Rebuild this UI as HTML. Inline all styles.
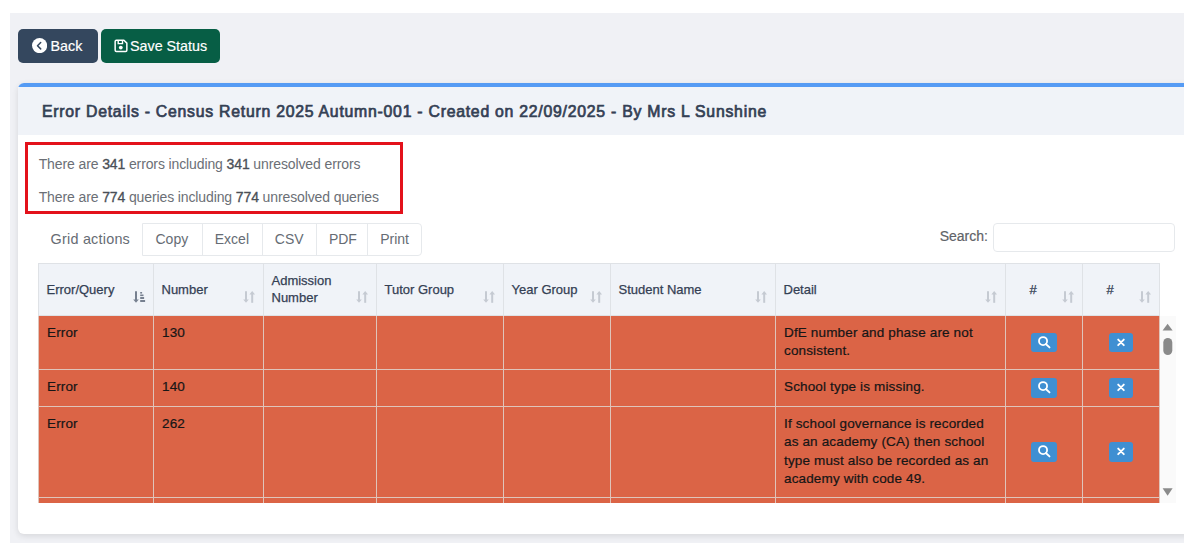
<!DOCTYPE html>
<html>
<head>
<meta charset="utf-8">
<style>
html,body{margin:0;padding:0;background:#fff;width:1197px;height:543px;overflow:hidden;}
body{font-family:"Liberation Sans",sans-serif;position:relative;}
.wrap{position:absolute;left:10px;top:13px;width:1174px;height:600px;background:#f0f1f5;overflow:hidden;}
.btn{position:absolute;top:16px;height:34px;border-radius:5px;color:#fff;font-size:14.3px;}
.btn span{position:absolute;top:0;line-height:34px;white-space:nowrap;-webkit-text-stroke:0.18px #fff;}
#back{left:8px;width:80px;background:#34475e;}
#save{left:91px;width:119px;background:#075e45;}
.card{position:absolute;left:8px;top:70px;width:1240px;height:450.6px;background:#fff;border-radius:6px;box-shadow:0 2px 6px rgba(0,0,0,.11);overflow:hidden;}
.card .topb{position:absolute;left:0;top:0;right:0;height:4px;background:#559bf4;}
.card .hdr{position:absolute;left:0;top:4px;right:0;height:48px;background:#f0f3f8;}
#title{position:absolute;left:24px;top:1.0px;line-height:48px;font-size:15.8px;font-weight:normal;-webkit-text-stroke:0.7px #344054;letter-spacing:0.753px;color:#344054;white-space:nowrap;}
.redbox{position:absolute;left:7px;top:59px;width:372px;height:66px;border:3px solid #e3111b;}
.stat{position:absolute;left:10.7px;font-size:14px;letter-spacing:-0.115px;color:#6b6f76;white-space:nowrap;}
.stat b{color:#4a4f57;font-weight:normal;-webkit-text-stroke:0.32px #4a4f57;}
#grida{position:absolute;left:32.6px;top:139px;font-size:14.4px;letter-spacing:0.22px;color:#666c74;white-space:nowrap;line-height:34px;}
.grp{position:absolute;left:124.3px;top:139.5px;height:31px;border:1px solid #e6e9ec;border-radius:0 4px 4px 0;display:flex;background:#fff;}
.grp div{height:31px;line-height:31px;font-size:14px;color:#666c74;text-align:left;padding-left:12.2px;border-left:1px solid #e6e9ec;box-sizing:border-box;}
.grp div:first-child{border-left:none;}
#searchl{position:absolute;left:921.7px;top:139px;font-size:14px;color:#5f6368;-webkit-text-stroke:0.2px #5f6368;line-height:29px;white-space:nowrap;}
.inp{position:absolute;left:975.4px;top:139.7px;width:181.4px;height:29px;box-sizing:border-box;border:1px solid #e6e9ec;border-radius:4px;background:#fff;}

.thead{position:absolute;left:20px;top:180px;width:1122px;height:53px;box-sizing:border-box;border:1px solid #dfe2e6;background:#f0f3f8;}
.vl{position:absolute;top:-1px;bottom:-1px;width:1px;background:#dfe2e6;}
.th{position:absolute;top:0;height:51px;display:flex;align-items:center;font-size:13px;line-height:17px;color:#344054;-webkit-text-stroke:0.25px #344054;white-space:nowrap;}
.th span{padding-left:7.5px;position:relative;top:-0.5px;}
.th.c span{padding-left:0;}
.sicon{position:absolute;top:27px;overflow:visible;}
.tbody{position:absolute;left:20px;top:233px;width:1138px;height:187px;overflow:hidden;background:#fafafa;}
.rows{position:absolute;left:0;top:0;width:1122px;height:300px;background:#db6446;}
.bl{position:absolute;background:#dfc4ba;}
.td{position:absolute;font-size:13.5px;line-height:18.3px;letter-spacing:0.15px;color:#161616;-webkit-text-stroke:0.22px #161616;}
.ib{position:absolute;height:19.6px;background:#3f8fd2;border-radius:3px;}
.sb{position:absolute;left:1122px;top:0;width:16px;height:187px;background:#fafafa;}
</style>
</head>
<body>
<div class="wrap">
  <div class="btn" id="back">
    <svg style="position:absolute;left:14.05px;top:9.05px" width="15.2" height="15.2" viewBox="0 0 15.2 15.2"><circle cx="7.6" cy="7.6" r="7.6" fill="#fff"/><path d="M8.7 4.5 L5.5 7.7 L8.7 10.9" stroke="#34475e" stroke-width="1.5" fill="none" stroke-linecap="round" stroke-linejoin="round"/></svg>
    <span id="backt" style="left:32.5px">Back</span>
  </div>
  <div class="btn" id="save">
    <svg style="position:absolute;left:12.5px;top:10px" width="14" height="14" viewBox="0 0 14 14"><path d="M2.4 1.2 H9.9 L12.85 4.15 V11.3 Q12.85 12.5 11.65 12.5 H2.4 Q1.15 12.5 1.15 11.3 V2.4 Q1.15 1.2 2.4 1.2 Z" stroke="#fff" stroke-width="1.5" fill="none" stroke-linejoin="round"/><path d="M4.2 1.2 V4.6 H8.5 V1.2" stroke="#fff" stroke-width="1.4" fill="none"/><circle cx="6.8" cy="8.6" r="1.9" fill="#fff"/></svg>
    <span id="savet" style="left:29px">Save Status</span>
  </div>
  <div class="card">
    <div class="topb"></div>
    <div class="hdr"><div id="title">Error Details - Census Return 2025 Autumn-001 - Created on 22/09/2025 - By Mrs L Sunshine</div></div>
    <div class="redbox">
      <div class="stat" id="stat1" style="top:10.8px">There are <b>341</b> errors including <b>341</b> unresolved errors</div>
      <div class="stat" id="stat2" style="top:44.3px">There are <b>774</b> queries including <b>774</b> unresolved queries</div>
    </div>
    <div id="grida">Grid actions</div>
    <div class="grp">
      <div style="width:58.3px">Copy</div>
      <div style="width:60px">Excel</div>
      <div style="width:54.1px">CSV</div>
      <div style="width:51.3px">PDF</div>
      <div style="width:54.2px">Print</div>
    </div>
    <div id="searchl">Search:</div>
    <div class="inp"></div>
<svg width="0" height="0" style="position:absolute">
<defs>
<g id="sorti"><path d="M3 0.2 V9.5" stroke="#c5cad2" stroke-width="2"/><path d="M0.2 8.4 L3 11.8 L5.8 8.4 Z" fill="#c5cad2"/><path d="M9.2 11.8 V2.3" stroke="#c5cad2" stroke-width="2"/><path d="M6.4 3.4 L9.2 0 L12 3.4 Z" fill="#c5cad2"/></g>
<g id="sorta"><path d="M3 0.2 V9.5" stroke="#778090" stroke-width="2"/><path d="M0.2 8.6 L3 11.8 L5.8 8.6 Z" fill="#778090"/><rect x="7.2" y="1" width="1.9" height="1.6" fill="#778090"/><rect x="7.2" y="3.5" width="3.3" height="1.6" fill="#778090"/><rect x="7.2" y="6" width="3.9" height="2" fill="#778090"/><rect x="7.2" y="9" width="4.9" height="2" fill="#778090"/></g>
<g id="mag"><circle cx="12.05" cy="8.1" r="4.05" stroke="#fff" stroke-width="1.8" fill="none"/><path d="M15.1 11.2 L18.5 14.4" stroke="#fff" stroke-width="1.9" stroke-linecap="round"/></g>
<g id="xic"><path d="M9.2 6.6 L14.8 12.2 M14.8 6.6 L9.2 12.2" stroke="#fff" stroke-width="1.9" stroke-linecap="round"/></g>
</defs></svg>
<div class="thead">
<div class="vl" style="left:114px"></div>
<div class="vl" style="left:224px"></div>
<div class="vl" style="left:337px"></div>
<div class="vl" style="left:464px"></div>
<div class="vl" style="left:571px"></div>
<div class="vl" style="left:736px"></div>
<div class="vl" style="left:966px"></div>
<div class="vl" style="left:1043px"></div>
<div class="th" id="th0" style="left:0px;width:114px"><span>Error/Query</span></div>
<svg class="sicon" style="left:94px" width="13" height="13" viewBox="0 0 13 13"><use href="#sorta"/></svg>
<div class="th" id="th1" style="left:115px;width:109px"><span>Number</span></div>
<svg class="sicon" style="left:204px" width="13" height="13" viewBox="0 0 13 13"><use href="#sorti"/></svg>
<div class="th" id="th2" style="left:225px;width:112px"><span>Admission<br>Number</span></div>
<svg class="sicon" style="left:317px" width="13" height="13" viewBox="0 0 13 13"><use href="#sorti"/></svg>
<div class="th" id="th3" style="left:338px;width:126px"><span>Tutor Group</span></div>
<svg class="sicon" style="left:444px" width="13" height="13" viewBox="0 0 13 13"><use href="#sorti"/></svg>
<div class="th" id="th4" style="left:465px;width:106px"><span>Year Group</span></div>
<svg class="sicon" style="left:551px" width="13" height="13" viewBox="0 0 13 13"><use href="#sorti"/></svg>
<div class="th" id="th5" style="left:572px;width:164px"><span>Student Name</span></div>
<svg class="sicon" style="left:716px" width="13" height="13" viewBox="0 0 13 13"><use href="#sorti"/></svg>
<div class="th" id="th6" style="left:737px;width:229px"><span>Detail</span></div>
<svg class="sicon" style="left:946px" width="13" height="13" viewBox="0 0 13 13"><use href="#sorti"/></svg>
<div class="th c" id="th7" style="left:967px;width:76px;justify-content:center"><span style="margin-right:22px">#</span></div>
<svg class="sicon" style="left:1023px" width="13" height="13" viewBox="0 0 13 13"><use href="#sorti"/></svg>
<div class="th c" id="th8" style="left:1044px;width:76px;justify-content:center"><span style="margin-right:22px">#</span></div>
<svg class="sicon" style="left:1100px" width="13" height="13" viewBox="0 0 13 13"><use href="#sorti"/></svg>
</div>
<div class="tbody"><div class="rows">
<div class="bl" style="left:0;top:0;width:1px;height:300px"></div>
<div class="bl" style="left:1121px;top:0;width:1px;height:300px"></div>
<div class="bl" style="left:115px;top:0;width:1px;height:300px"></div>
<div class="bl" style="left:225px;top:0;width:1px;height:300px"></div>
<div class="bl" style="left:338px;top:0;width:1px;height:300px"></div>
<div class="bl" style="left:465px;top:0;width:1px;height:300px"></div>
<div class="bl" style="left:572px;top:0;width:1px;height:300px"></div>
<div class="bl" style="left:737px;top:0;width:1px;height:300px"></div>
<div class="bl" style="left:967px;top:0;width:1px;height:300px"></div>
<div class="bl" style="left:1044px;top:0;width:1px;height:300px"></div>
<div class="bl" style="left:0;top:53px;width:1122px;height:1px"></div>
<div class="bl" style="left:0;top:90px;width:1122px;height:1px"></div>
<div class="bl" style="left:0;top:181px;width:1122px;height:1px"></div>
<div class="td" id="r0a" style="left:9px;top:8px">Error</div>
<div class="td" id="r0b" style="left:124px;top:8px">130</div>
<div class="td" id="r0d" style="left:746px;top:8px;width:214px">DfE number and phase are not consistent.</div>
<div class="ib" style="left:992.5999999999999px;top:16.7px;width:26.2px"><svg width="26.2" height="19.6" viewBox="0 0 26.2 19.6"><use href="#mag"/></svg></div>
<div class="ib" style="left:1071px;top:16.7px;width:23.6px"><svg width="23.6" height="19.6" viewBox="0 0 23.6 19.6"><use href="#xic"/></svg></div>
<div class="td" id="r1a" style="left:9px;top:62px">Error</div>
<div class="td" id="r1b" style="left:124px;top:62px">140</div>
<div class="td" id="r1d" style="left:746px;top:62px;width:214px">School type is missing.</div>
<div class="ib" style="left:992.5999999999999px;top:62.2px;width:26.2px"><svg width="26.2" height="19.6" viewBox="0 0 26.2 19.6"><use href="#mag"/></svg></div>
<div class="ib" style="left:1071px;top:62.2px;width:23.6px"><svg width="23.6" height="19.6" viewBox="0 0 23.6 19.6"><use href="#xic"/></svg></div>
<div class="td" id="r2a" style="left:9px;top:99px">Error</div>
<div class="td" id="r2b" style="left:124px;top:99px">262</div>
<div class="td" id="r2d" style="left:746px;top:99px;width:214px">If school governance is recorded as an academy (CA) then school type must also be recorded as an academy with code 49.</div>
<div class="ib" style="left:992.5999999999999px;top:126.2px;width:26.2px"><svg width="26.2" height="19.6" viewBox="0 0 26.2 19.6"><use href="#mag"/></svg></div>
<div class="ib" style="left:1071px;top:126.2px;width:23.6px"><svg width="23.6" height="19.6" viewBox="0 0 23.6 19.6"><use href="#xic"/></svg></div>
</div>
<div class="sb"><svg width="16" height="187" viewBox="0 0 16 187"><path d="M2.6 14.6 L7.6 7.7 L12.6 14.6 Z" fill="#8a8a8a"/><rect x="3.3" y="22" width="9" height="17" rx="4.5" fill="#8a8a8a"/><path d="M2.6 172.2 L7.6 179.8 L12.6 172.2 Z" fill="#8a8a8a"/></svg></div>
</div>
  </div>
</div>
</body>
</html>
